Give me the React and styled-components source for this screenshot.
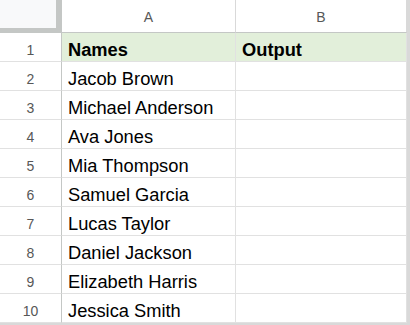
import styled, { createGlobalStyle } from "styled-components";

const GlobalStyle = createGlobalStyle`
  html, body {
    margin: 0;
    padding: 0;
    background: #ffffff;
  }
`;

const Sheet = styled.div`
  display: grid;
  grid-template-columns: 62px 174px 171px;
  grid-auto-rows: 29px;
  grid-template-rows: 33px;
  width: 407px;
  border-right: 3px solid #d9d9d9;
  border-bottom: 3px solid #d9d9d9;
  font-family: "Liberation Sans", Arial, sans-serif;
`;

const Corner = styled.div`
  background: #f8f9fa;
  border-right: 6px solid #c4c7c5;
  border-bottom: 5px solid #c4c7c5;
`;

const ColHead = styled.div`
  display: flex;
  align-items: center;
  justify-content: center;
  font-size: 14px;
  color: #575757;
  border-right: 1px solid #d9d9d9;
  border-bottom: 1px solid #c4c7c5;
  box-sizing: border-box;
  padding-top: 1px;
`;

const RowHead = styled.div`
  display: flex;
  align-items: center;
  justify-content: center;
  padding-top: 5px;
  font-size: 14px;
  color: #575757;
  border-right: 1px solid #c4c7c5;
  border-bottom: 1px solid #e1e1e1;
  box-sizing: border-box;
`;

const Cell = styled.div`
  display: flex;
  align-items: center;
  padding: 5px 0 0 6px;
  font-size: 18.3px;
  font-weight: ${(p) => (p.$head ? 700 : 400)};
  color: #000;
  background: ${(p) => (p.$head ? "#e2efda" : "#ffffff")};
  border-right: 1px solid #e1e1e1;
  border-bottom: 1px solid #e1e1e1;
  box-sizing: border-box;
  white-space: nowrap;
  overflow: hidden;
`;

const names = [
  "Jacob Brown",
  "Michael Anderson",
  "Ava Jones",
  "Mia Thompson",
  "Samuel Garcia",
  "Lucas Taylor",
  "Daniel Jackson",
  "Elizabeth Harris",
  "Jessica Smith",
];

export default function App() {
  return (
    <>
      <GlobalStyle />
      <Sheet>
        <Corner />
        <ColHead>A</ColHead>
        <ColHead>B</ColHead>

        <RowHead>1</RowHead>
        <Cell $head>Names</Cell>
        <Cell $head>Output</Cell>

        {names.map((name, i) => (
          <Row key={name} n={i + 2} name={name} />
        ))}
      </Sheet>
    </>
  );
}

function Row({ n, name }) {
  return (
    <>
      <RowHead>{n}</RowHead>
      <Cell>{name}</Cell>
      <Cell />
    </>
  );
}
